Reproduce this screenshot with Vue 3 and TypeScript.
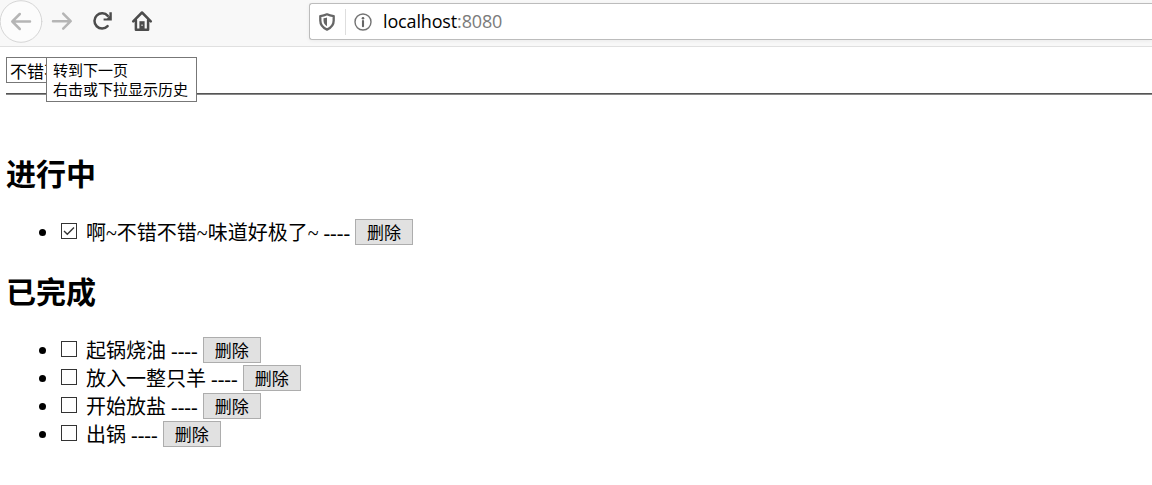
<script setup lang="ts">
import { ref, computed } from 'vue'

interface Todo {
  id: number
  title: string
  checked: boolean
}

const draft = ref('不错不错')
const todos = ref<Todo[]>([
  { id: 1, title: '啊~不错不错~味道好极了~', checked: true },
  { id: 2, title: '起锅烧油', checked: false },
  { id: 3, title: '放入一整只羊', checked: false },
  { id: 4, title: '开始放盐', checked: false },
  { id: 5, title: '出锅', checked: false },
])

const groups = computed(() => [
  { name: '进行中', items: todos.value.filter((t) => t.checked) },
  { name: '已完成', items: todos.value.filter((t) => !t.checked) },
])

function remove(id: number) {
  todos.value = todos.value.filter((t) => t.id !== id)
}
</script>

<template>
  <div class="window">
    <header class="toolbar">
      <svg class="nav" width="160" height="46" viewBox="0 0 160 46" fill="none" stroke-linecap="round" stroke-linejoin="round">
        <circle cx="21" cy="21.5" r="20.8" fill="#fcfcfc" stroke="#d6d6d6" />
        <path d="M30 21.5H12.5M19.8 14L12.3 21.5L19.8 29" stroke="#b5b5b5" stroke-width="2.5" />
        <path d="M53 21.2H70.5M63.2 13.7L70.7 21.2L63.2 28.7" stroke="#b5b5b5" stroke-width="2.5" />
        <path d="M107.6 26.1A7.6 7.6 0 1 1 107.8 15.9" stroke="#4c4c4c" stroke-width="2.5" />
        <path d="M111.8 12.3V20.6H103.6V18.4H107L109.4 16V12.3Z" fill="#4c4c4c" />
        <path d="M133.2 21.3L142 12.5L150.8 21.3M135.9 20V29.8H148.1V20" stroke="#4c4c4c" stroke-width="2.5" />
        <path d="M139.4 30V21.2H144.6V30Z" fill="#4c4c4c" />
        <rect x="141.4" y="24.5" width="1.3" height="1.5" fill="#d8d8d8" />
      </svg>
      <div class="address">
        <svg class="shield" width="18" height="20" viewBox="0 0 18 20">
          <path d="M9 2.3C7 3.3 4.5 3.9 2.3 4.1V8.5C2.3 12.8 4.5 15.6 9 17.6C13.5 15.6 15.7 12.8 15.7 8.5V4.1C13.5 3.9 11 3.3 9 2.3Z" fill="none" stroke="#666" stroke-width="2.3" stroke-linejoin="round" />
          <path d="M9 5.5V14.2C6.6 12.8 5.5 11 5.5 8.5V6.3C6.7 6.2 7.9 5.9 9 5.5Z" fill="#666" />
        </svg>
        <span class="divider"></span>
        <svg class="info" width="18" height="18" viewBox="0 0 18 18">
          <circle cx="9" cy="9" r="8" fill="none" stroke="#737373" stroke-width="1.4" />
          <circle cx="9" cy="5.2" r="1.3" fill="#666" />
          <path d="M9 8V13.3" stroke="#666" stroke-width="2.1" stroke-linecap="round" />
        </svg>
        <span class="url">localhost<span class="port">:8080</span></span>
      </div>
    </header>

    <main class="page">
      <div class="entry">
        <input v-model="draft" class="draft" type="text" />
        <div class="tooltip">转到下一页<br />右击或下拉显示历史</div>
      </div>
      <hr class="rule" />
      <section v-for="group in groups" :key="group.name" class="group">
        <h2>{{ group.name }}</h2>
        <ul>
          <li v-for="todo in group.items" :key="todo.id">
            <span class="bullet"></span>
            <label class="box">
              <input v-model="todo.checked" type="checkbox" />
              <svg v-if="todo.checked" width="14" height="14" viewBox="0 0 14 14">
                <path d="M2 7L5.3 10.3L12 3.6" fill="none" stroke="#333" stroke-width="1.4" />
              </svg>
            </label>
            <span class="title">{{ todo.title }} ----</span>
            <button type="button" @click="remove(todo.id)">删除</button>
          </li>
        </ul>
      </section>
    </main>
  </div>
</template>

<style>
body {
  background: #fff;
  overflow: hidden;
}
</style>

<style scoped>
.window {
  height: 485px;
  overflow: hidden;
  color: #000;
  font-family: "Liberation Serif", "Noto Sans CJK SC", serif;
}
.toolbar {
  box-sizing: border-box;
  height: 47px;
  display: flex;
  align-items: flex-start;
  background: #f8f8f8;
  border-bottom: 1px solid #e0e0e0;
}
.nav {
  flex: none;
  margin-right: 149px;
}
.address {
  box-sizing: border-box;
  flex: 1;
  height: 37px;
  margin-top: 3px;
  display: flex;
  align-items: center;
  background: #fff;
  border: 1px solid #bcbcbc;
  border-right: 0;
  border-radius: 3px 0 0 3px;
  box-shadow: 0 1px 4px rgba(0, 0, 0, 0.06);
}
.shield {
  margin-left: 8px;
}
.divider {
  width: 1px;
  height: 26px;
  margin: 0 8px 0 9px;
  background: #dedede;
}
.info {
  margin-right: 11px;
}
.url {
  padding-bottom: 2px;
  font: 18px/26px "Open Sans", "Noto Sans", sans-serif;
  letter-spacing: -0.15px;
  white-space: nowrap;
}
.port {
  color: #7b7b7b;
}
.page {
  padding: 10px 0 0 6px;
}
.entry {
  position: relative;
  height: 36px;
}
.draft {
  box-sizing: border-box;
  display: block;
  width: 90px;
  height: 26px;
  padding: 0 3px;
  border: 1px solid #777;
  font: 17px/24px "Liberation Sans", "Noto Sans CJK SC", sans-serif;
}
.tooltip {
  position: absolute;
  left: 40px;
  top: 0;
  box-sizing: border-box;
  width: 151px;
  height: 45px;
  padding: 3px 0 0 6px;
  border: 1px solid #777;
  background: #fff;
  font: 15px/19px "Liberation Sans", "Noto Sans CJK SC", sans-serif;
  white-space: nowrap;
}
.rule {
  height: 0;
  margin: 0 0 59px;
  border: 0;
  border-top: 1px solid #555;
  border-bottom: 1px solid #888;
}
.group {
  height: 118px;
}
h2 {
  margin: 0;
  height: 65px;
  font: bold 30px/42px "Liberation Serif", "Noto Sans CJK SC", serif;
}
ul {
  margin: 0;
  padding: 0 0 0 33px;
  list-style: none;
}
li {
  height: 28px;
  display: flex;
  align-items: flex-start;
}
.bullet {
  width: 7px;
  height: 7px;
  margin: 10px 15px 0 0;
  border-radius: 50%;
  background: #000;
}
.box {
  box-sizing: border-box;
  position: relative;
  width: 16px;
  height: 16px;
  margin: 4px 9px 0 0;
  border: 1px solid #333;
}
.box input {
  position: absolute;
  inset: 0;
  margin: 0;
  opacity: 0;
}
.box svg {
  display: block;
}
.title {
  margin-right: 5px;
  font-size: 20px;
  line-height: 28px;
  white-space: nowrap;
}
button {
  box-sizing: border-box;
  width: 58px;
  height: 26px;
  margin: 0;
  padding: 3px 0 0;
  border: 1px solid #adadad;
  border-radius: 0;
  background: #e1e1e1;
  color: #000;
  font: 17px/21px "Liberation Sans", "Noto Sans CJK SC", sans-serif;
}
</style>
